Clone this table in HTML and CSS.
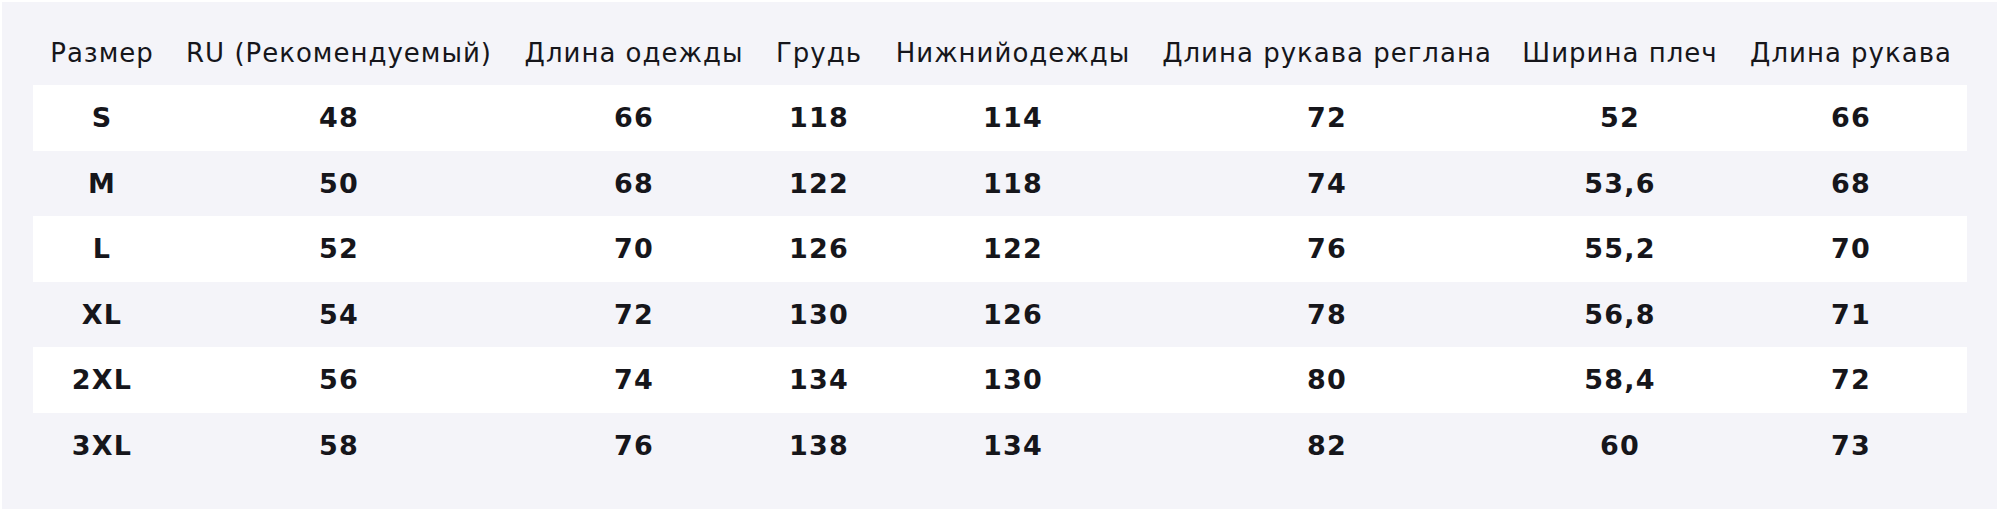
FILE: index.html
```html
<!DOCTYPE html>
<html lang="ru">
<head>
<meta charset="utf-8">
<title>Таблица размеров</title>
<link rel="stylesheet" href="styles.css">
</head>
<body>
<div class="frame">
  <div class="panel">
    <table class="sizes">
      <colgroup>
        <col class="c1"><col class="c2"><col class="c3"><col class="c4">
        <col class="c5"><col class="c6"><col class="c7"><col class="c8">
      </colgroup>
      <thead>
        <tr>
          <th>Размер</th>
          <th>RU (Рекомендуемый)</th>
          <th>Длина одежды</th>
          <th>Грудь</th>
          <th>Нижнийодежды</th>
          <th>Длина рукава реглана</th>
          <th>Ширина плеч</th>
          <th>Длина рукава</th>
        </tr>
      </thead>
      <tbody>
        <tr class="odd"><td>S</td><td>48</td><td>66</td><td>118</td><td>114</td><td>72</td><td>52</td><td>66</td></tr>
        <tr><td>M</td><td>50</td><td>68</td><td>122</td><td>118</td><td>74</td><td>53,6</td><td>68</td></tr>
        <tr class="odd"><td>L</td><td>52</td><td>70</td><td>126</td><td>122</td><td>76</td><td>55,2</td><td>70</td></tr>
        <tr><td>XL</td><td>54</td><td>72</td><td>130</td><td>126</td><td>78</td><td>56,8</td><td>71</td></tr>
        <tr class="odd"><td>2XL</td><td>56</td><td>74</td><td>134</td><td>130</td><td>80</td><td>58,4</td><td>72</td></tr>
        <tr><td>3XL</td><td>58</td><td>76</td><td>138</td><td>134</td><td>82</td><td>60</td><td>73</td></tr>
      </tbody>
    </table>
  </div>
</div>
</body>
</html>
```

FILE: styles.css
```css
html, body {
  margin: 0;
  padding: 0;
  background: #ffffff;
}

.frame {
  width: 2000px;
  height: 512px;
  box-sizing: border-box;
  padding: 2px 3px 3px 2px;
}

.panel {
  height: 100%;
  box-sizing: border-box;
  background: #f4f4f9;
  padding: 18px 30px 31px 31px;
}

.sizes {
  width: 1934px;
  border-collapse: collapse;
  table-layout: fixed;
  font-family: "DejaVu Sans", sans-serif;
  font-size: 26px;
  color: #16161b;
}

.c1 { width: 138px; }
.c2 { width: 336px; }
.c3 { width: 254px; }
.c4 { width: 116px; }
.c5 { width: 272px; }
.c6 { width: 356px; }
.c7 { width: 230px; }
.c8 { width: 232px; }

.sizes th {
  height: 65px;
  padding: 0;
  font-weight: normal;
  letter-spacing: 1px;
  text-align: center;
  vertical-align: middle;
  white-space: nowrap;
}

.sizes td {
  height: 65.5px;
  padding: 0;
  font-size: 27px;
  font-weight: bold;
  letter-spacing: 1.2px;
  text-align: center;
  vertical-align: middle;
}

.sizes tr.odd td {
  background: #ffffff;
}
```
